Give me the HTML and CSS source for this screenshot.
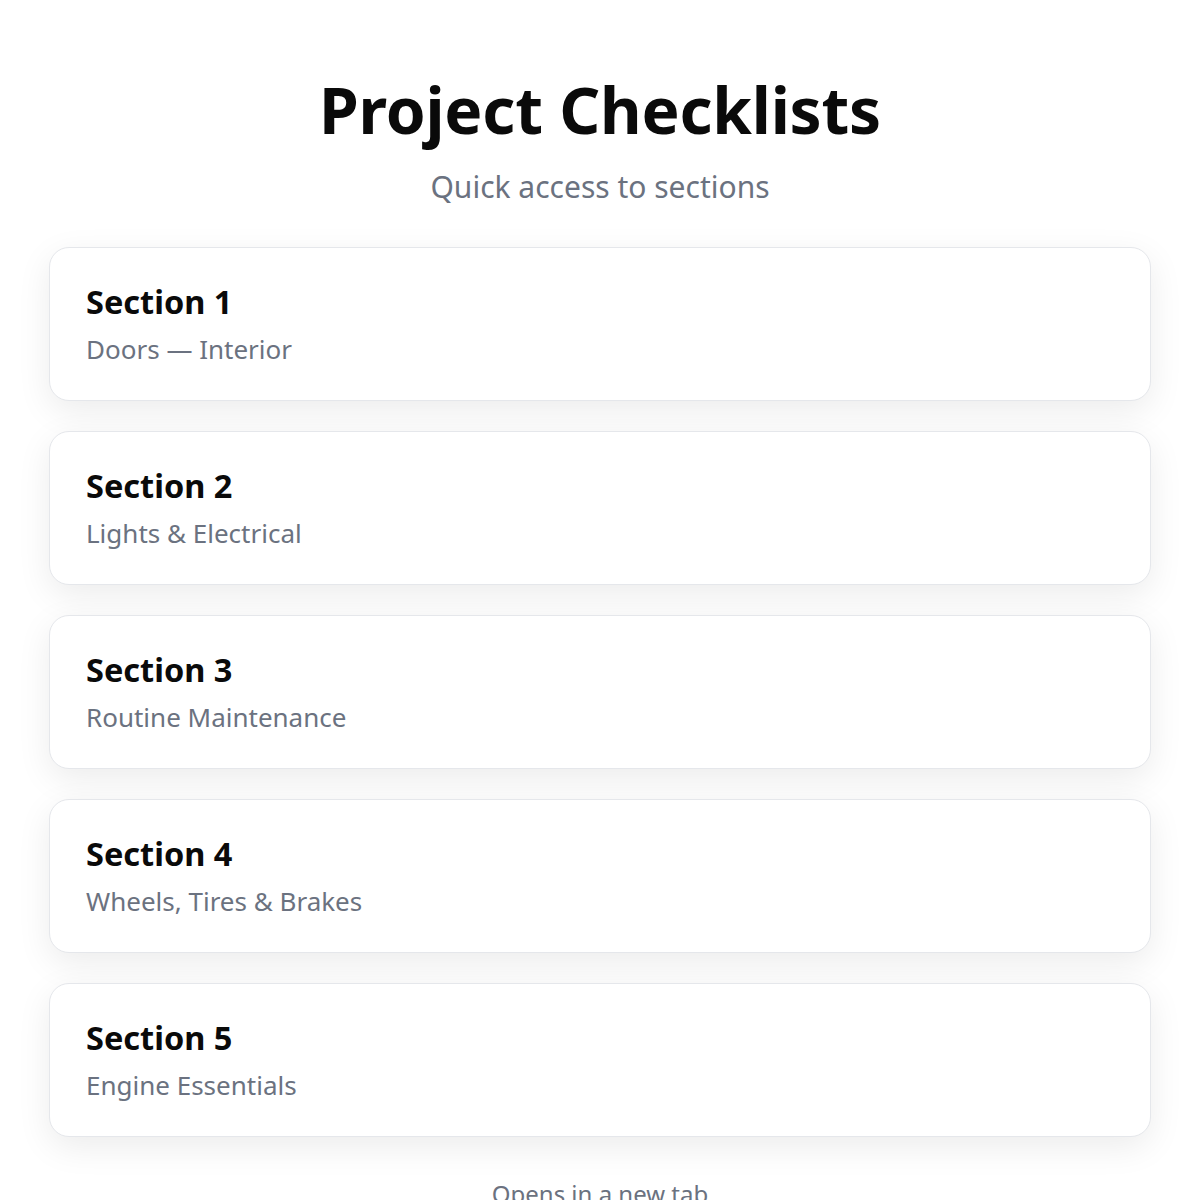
FILE: index.html
```html
<!DOCTYPE html>
<html lang="en">
<head>
<meta charset="utf-8">
<title>Project Checklists</title>
<link rel="stylesheet" href="styles.css">
</head>
<body>
<main class="page">
  <header class="head">
    <h1 class="title">Project Checklists</h1>
    <p class="subtitle">Quick access to sections</p>
  </header>
  <nav class="list">
    <a class="card" href="#" target="_blank"><span class="card-title">Section 1</span><span class="card-sub">Doors — Interior</span></a>
    <a class="card" href="#" target="_blank"><span class="card-title">Section 2</span><span class="card-sub">Lights &amp; Electrical</span></a>
    <a class="card" href="#" target="_blank"><span class="card-title">Section 3</span><span class="card-sub">Routine Maintenance</span></a>
    <a class="card" href="#" target="_blank"><span class="card-title">Section 4</span><span class="card-sub">Wheels, Tires &amp; Brakes</span></a>
    <a class="card" href="#" target="_blank"><span class="card-title">Section 5</span><span class="card-sub">Engine Essentials</span></a>
  </nav>
  <p class="note">Opens in a new tab</p>
</main>
</body>
</html>
```
FILE: styles.css
```css
html, body {
  margin: 0;
  padding: 0;
  background: #ffffff;
}
body {
  font-family: "Noto Sans", "Open Sans", sans-serif;
  color: #0a0a0a;
}
.page {
  padding: 72px 49px 40px;
  display: flex;
  flex-direction: column;
}
.head {
  text-align: center;
  margin-bottom: 40px;
}
.title {
  margin: 0;
  font-size: 64px;
  line-height: 76px;
  font-weight: 700;
  letter-spacing: -0.2px;
}
.subtitle {
  margin: 19px 0 0;
  font-size: 30px;
  line-height: 40px;
  color: #6b7280;
}
.list {
  display: flex;
  flex-direction: column;
  gap: 30px;
}
.card {
  display: flex;
  flex-direction: column;
  gap: 10px;
  height: 154px;
  box-sizing: border-box;
  padding: 34px 36px 0;
  background: #fff;
  border: 1px solid #e5e7eb;
  border-radius: 20px;
  box-shadow: 0 10px 34px rgba(0, 0, 0, 0.08);
  text-decoration: none;
}
.card-title {
  font-size: 32.5px;
  line-height: 40px;
  font-weight: 700;
  color: #0a0a0a;
}
.card-sub {
  font-size: 26px;
  line-height: 34px;
  color: #6b7280;
}
.note {
  margin: 41px 0 0;
  text-align: center;
  font-size: 24px;
  line-height: 32px;
  color: #6b7280;
}
```
